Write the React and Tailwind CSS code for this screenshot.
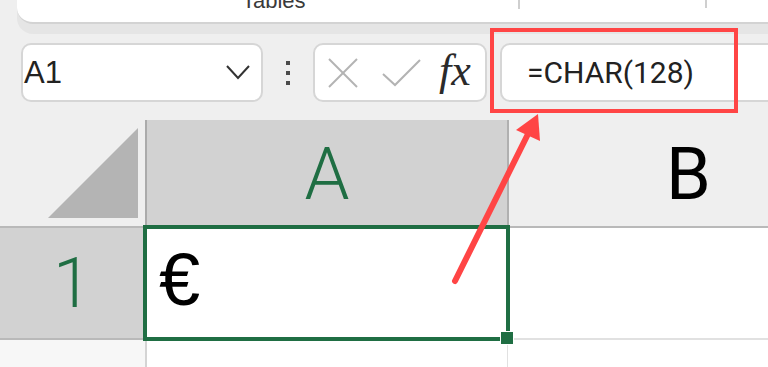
export default function App() {
  const green = "#1f6e43";
  return (
    <div
      className="relative w-[768px] h-[367px] overflow-hidden bg-[#efefef]"
      style={{ fontFamily: '"Liberation Sans", Arial, sans-serif' }}
    >
      {/* top ribbon panel */}
      <div className="ml-[17px] h-[24px] bg-white rounded-bl-[16px] border-b-2 border-[#d3d3d3] shadow-[0_10px_0_#e5e5e5] flex items-start overflow-hidden">
        <div className="w-[225px] shrink-0" />
        <div className="w-[276px] shrink-0 flex justify-start">
          <span className="text-[22px] leading-[22px] -mt-[10px] text-[#3a3a3a]">Tables</span>
        </div>
        <div className="w-[2px] h-[9px] bg-[#cfcfcf] shrink-0" />
        <div className="w-[185px] shrink-0" />
        <div className="w-[2px] h-[8px] bg-[#cfcfcf] shrink-0" />
      </div>

      {/* formula bar */}
      <div className="mt-[19px] h-[59px] flex items-stretch">
        <div className="ml-[21px] w-[242px] shrink-0 bg-white border-2 border-[#d6d6d6] rounded-[10px] flex items-center justify-between">
          <span className="pl-[1px] text-[31px] leading-none text-[#222]">A1</span>
          <svg width="24" height="15" viewBox="0 0 24 15" className="mr-[11px]">
            <polyline points="1,1 12,13 23,1" fill="none" stroke="#333" strokeWidth="2" />
          </svg>
        </div>
        <div className="w-[50px] shrink-0 flex flex-col items-center justify-center gap-[6px] pt-[1px]">
          <div className="w-[4px] h-[4px] bg-[#4a4a4a]" />
          <div className="w-[4px] h-[4px] bg-[#4a4a4a]" />
          <div className="w-[4px] h-[4px] bg-[#4a4a4a]" />
        </div>
        <div className="w-[174px] shrink-0 bg-white border-2 border-[#d6d6d6] rounded-[10px] flex items-center">
          <svg width="30" height="30" viewBox="0 0 30 30" className="ml-[13px] shrink-0">
            <line x1="1" y1="1" x2="29" y2="29" stroke="#b3b3b3" strokeWidth="2" />
            <line x1="29" y1="1" x2="1" y2="29" stroke="#b3b3b3" strokeWidth="2" />
          </svg>
          <svg width="39" height="28" viewBox="0 0 39 28" className="ml-[24px] shrink-0">
            <polyline points="1,15 13,26 38,1" fill="none" stroke="#b3b3b3" strokeWidth="2" />
          </svg>
          <span
            className="ml-[18px] text-[44px] leading-none italic text-[#2a2a2a] -mt-[4px]"
            style={{ fontFamily: '"Liberation Serif", "Times New Roman", serif' }}
          >
            fx
          </span>
        </div>
        <div className="ml-[13px] w-[320px] shrink-0 bg-white border-2 border-[#d6d6d6] rounded-[10px] flex items-center">
          <span
            className="pl-[25px] text-[30px] leading-none text-[#222]"
            style={{ fontFamily: 'Roboto, "Liberation Sans", sans-serif' }}
          >
            =CHAR(128)
          </span>
        </div>
      </div>

      {/* grid */}
      <div className="mt-[18px]">
        {/* header row */}
        <div className="flex h-[108px] border-b-2 border-[#b9b9b9]">
          <div className="w-[145px] shrink-0 bg-[#efefef] relative">
            <svg width="145" height="106" viewBox="0 0 145 106" className="block">
              <polygon points="138,8 48,98 138,98" fill="#b4b4b4" />
            </svg>
          </div>
          <div
            className="w-[362px] shrink-0 bg-[#d2d2d2] border-l-2 border-[#ababab] flex items-center justify-center"
            style={{ fontFamily: 'Roboto, "Liberation Sans", sans-serif' }}
          >
            <span className="text-[72px] leading-none font-light pt-[4px]" style={{ color: green }}>A</span>
          </div>
          <div
            className="w-[361px] shrink-0 bg-[#efefef] border-l-2 border-[#b0b0b0] flex items-center justify-center"
            style={{ fontFamily: 'Roboto, "Liberation Sans", sans-serif' }}
          >
            <span className="text-[72px] leading-none text-black pt-[4px]">B</span>
          </div>
        </div>

        {/* row 1 */}
        <div className="flex h-[112px]">
          <div
            className="w-[145px] shrink-0 bg-[#d2d2d2] border-b-2 border-[#b9b9b9] flex items-center justify-center"
            style={{ fontFamily: 'Roboto, "Liberation Sans", sans-serif' }}
          >
            <span className="text-[70px] leading-none font-light" style={{ color: green }}>1</span>
          </div>
          <div className="w-[362px] shrink-0 bg-white border-l-2 border-[#d4d4d4] border-b-2 flex items-center">
            <span className="pl-[12px] pb-[6px] text-[74px] leading-none text-black">€</span>
          </div>
          <div className="w-[361px] shrink-0 bg-white border-l border-[#e1e1e1] border-b-2" />
        </div>

        {/* row 2 */}
        <div className="flex h-[40px]">
          <div className="w-[145px] shrink-0 bg-[#f7f7f7]" />
          <div className="w-[362px] shrink-0 bg-white border-l-2 border-[#d4d4d4]" />
          <div className="w-[361px] shrink-0 bg-white border-l border-[#e1e1e1]" />
        </div>
      </div>

      {/* selection outline */}
      <div className="absolute left-[143px] top-[225px] w-[367px] h-[116px] border-4" style={{ borderColor: green }} />
      <div className="absolute left-[500px] top-[331px] w-[14px] h-[14px] border border-white" style={{ backgroundColor: green }} />

      {/* annotation: red box */}
      <div className="absolute left-[490px] top-[28px] w-[248px] h-[85px] border-4 border-[#ff4545]" />

      {/* annotation: arrow */}
      <svg className="absolute left-0 top-0 pointer-events-none" width="768" height="367" viewBox="0 0 768 367">
        <line x1="455" y1="281" x2="528" y2="134" stroke="#ff4545" strokeWidth="6" strokeLinecap="round" />
        <polygon points="538,114 540,141 516,130" fill="#ff4545" />
      </svg>
    </div>
  );
}
